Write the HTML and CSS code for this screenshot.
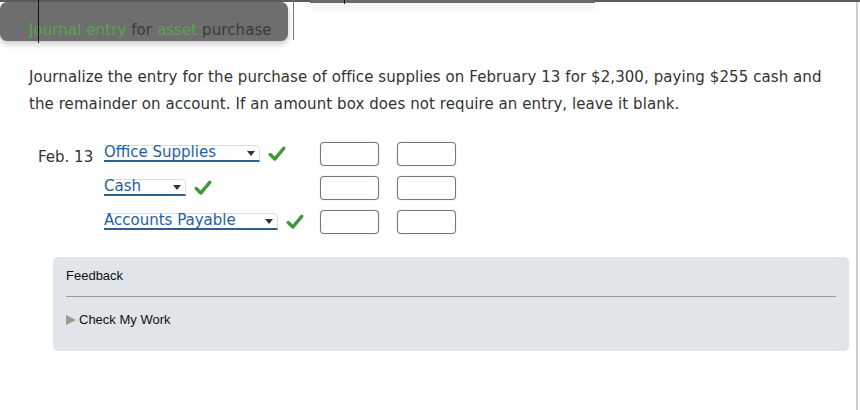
FILE: index.html
```html
<!DOCTYPE html>
<html>
<head>
<meta charset="utf-8">
<link rel="stylesheet" href="styles.css">
</head>
<body>
<div class="topbar"></div>
<div class="top-shadow"><span class="tick"></span></div>
<div class="tooltip"><span class="g">Journal entry</span> for <span class="g">asset</span> purchase</div>
<span class="vline vline-a"></span>
<span class="vline vline-b"></span>
<div class="scroll-edge"></div>

<main class="content">
  <p class="prompt">Journalize the entry for the purchase of office supplies on February 13 for $2,300, paying $255 cash and the remainder on account. If an amount box does not require an entry, leave it blank.</p>

  <div class="journal">
    <div class="date">Feb. 13</div>
    <div class="acct">
      <div class="sel w1"><span>Office Supplies</span><i class="arrow"></i></div>
      <svg class="check" viewBox="0 0 16 16"><path d="M2 8.5 L6 12.5 L14 3" /></svg>
    </div>
    <div class="amt"></div>
    <div class="amt"></div>

    <div class="date"></div>
    <div class="acct">
      <div class="sel w2"><span>Cash</span><i class="arrow"></i></div>
      <svg class="check" viewBox="0 0 16 16"><path d="M2 8.5 L6 12.5 L14 3" /></svg>
    </div>
    <div class="amt"></div>
    <div class="amt"></div>

    <div class="date"></div>
    <div class="acct">
      <div class="sel w3"><span>Accounts Payable</span><i class="arrow"></i></div>
      <svg class="check" viewBox="0 0 16 16"><path d="M2 8.5 L6 12.5 L14 3" /></svg>
    </div>
    <div class="amt"></div>
    <div class="amt"></div>
  </div>

  <section class="feedback">
    <div class="fb-title">Feedback</div>
    <hr class="fb-rule">
    <div class="fb-check"><i class="tri"></i>Check My Work</div>
  </section>
</main>
</body>
</html>
```
FILE: styles.css
```css
html, body {
  margin: 0;
  padding: 0;
  background: #fff;
}
body {
  position: relative;
  width: 860px;
  height: 410px;
  overflow: hidden;
  font-family: "DejaVu Sans", Verdana, sans-serif;
  color: #333;
}
.topbar {
  height: 2px;
  background: #5c5c5c;
}
.top-shadow {
  position: absolute;
  top: 0;
  left: 310px;
  width: 285px;
  height: 3px;
  background: #6a6a6a;
  box-shadow: 0 3px 8px rgba(0,0,0,0.18);
}
.tick {
  position: absolute;
  left: 34px;
  top: 0;
  width: 1px;
  height: 4px;
  background: #111;
}
.tooltip {
  position: absolute;
  top: 2px;
  left: 0;
  width: 288px;
  height: 39px;
  box-sizing: border-box;
  padding: 18px 0 0 29px;
  background: #6e6e6e;
  border-radius: 7px;
  box-shadow: 0 3px 6px rgba(0,0,0,0.22);
  font-size: 15px;
  line-height: 20px;
  color: #3a3a3a;
  white-space: nowrap;
  letter-spacing: 0.08px;
}
.tooltip .g { color: #5aa350; }
.vline {
  position: absolute;
  top: 0;
  width: 1px;
}
.vline-a { left: 38px; height: 43px; background: #111; }
.vline-b { left: 293px; height: 40px; background: #777; }
.scroll-edge {
  position: absolute;
  top: 2px;
  right: 2px;
  width: 2px;
  bottom: 0;
  background: #cfcfcf;
}
.content {
  padding: 62px 0 0 29px;
}
.prompt {
  margin: 0;
  width: 815px;
  font-size: 15px;
  line-height: 27px;
  color: #333;
  letter-spacing: 0.08px;
}
.journal {
  margin-top: 19px;
  display: grid;
  grid-template-columns: 66px 216px 59px 59px;
  grid-auto-rows: 34px;
  column-gap: 0;
  margin-left: 9px;
  align-items: center;
}
.journal .amt:nth-child(4n) { margin-left: 18px; }
.date {
  font-size: 15px;
  line-height: 18px;
  color: #333;
  padding-top: 5px;
}
.acct {
  display: flex;
  align-items: center;
}
.sel {
  position: relative;
  box-sizing: border-box;
  height: 17px;
  border: 1px solid #ddd;
  border-bottom: 2px solid #2a6190;
  border-left: none;
  border-radius: 0 5px 0 0;
  background: #fff;
  color: #2461a0;
  font-size: 15px;
  line-height: 15px;
  white-space: nowrap;
  margin-top: -2px;
}
.sel span { position: relative; top: -1px; }
.w1 { width: 156px; }
.w2 { width: 82px; }
.w3 { width: 174px; }
.arrow {
  position: absolute;
  right: 4px;
  top: 5px;
  width: 0;
  height: 0;
  border-left: 4px solid transparent;
  border-right: 4px solid transparent;
  border-top: 5px solid #333;
}
.check {
  width: 18px;
  height: 18px;
  margin-left: 8px;
  fill: none;
  stroke: #3c9a3c;
  stroke-width: 3;
  stroke-linecap: round;
  stroke-linejoin: round;
}
.amt {
  box-sizing: border-box;
  width: 59px;
  height: 24px;
  border: 1px solid #777;
  border-radius: 4px;
  background: #fff;
  box-shadow: 0 0 1px rgba(0,0,0,0.35);
}
.feedback {
  margin: 18px 0 0 24px;
  width: 796px;
  height: 94px;
  box-sizing: border-box;
  padding: 11px 13px 0 13px;
  background: #dfe5e8;
  border-radius: 5px;
  font-family: "Liberation Sans", Arial, sans-serif;
  font-size: 13px;
  color: #111;
}
.fb-title { line-height: 16px; }
.fb-rule {
  margin: 12px 0 0 0;
  border: none;
  height: 1px;
  background: #9a9a9a;
}
.fb-check {
  margin-top: 15px;
  line-height: 16px;
  display: flex;
  align-items: center;
}
.tri {
  width: 0;
  height: 0;
  border-top: 5px solid transparent;
  border-bottom: 5px solid transparent;
  border-left: 10px solid #999;
  margin-right: 3px;
}
```
